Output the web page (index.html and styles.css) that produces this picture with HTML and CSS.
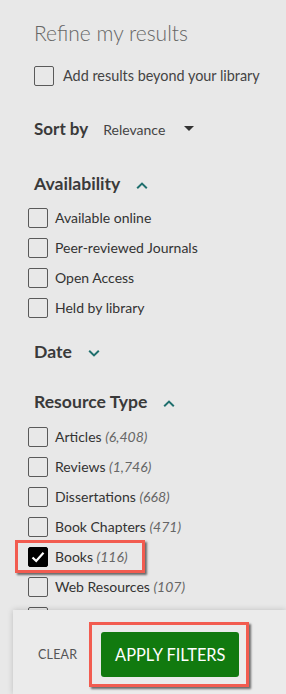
FILE: index.html
```html
<!DOCTYPE html>
<html lang="en">
<head>
<meta charset="utf-8">
<title>Refine my results</title>
<link rel="stylesheet" href="styles.css">
</head>
<body>
<div class="panel">
  <h2 class="title">Refine my results</h2>

  <label class="row row-wide">
    <span class="box"></span>
    <span class="label label-wide">Add results beyond your library</span>
  </label>

  <div class="sort">
    <span class="sort-label">Sort by</span>
    <span class="sort-value">Relevance</span>
    <svg class="caret" width="10" height="5" viewBox="0 0 10 5"><path d="M0 0H10L5 5Z" fill="#333"/></svg>
  </div>

  <h3 class="facet-head facet-avail">Availability
    <svg class="chev" width="12" height="7" viewBox="0 0 12 7"><path d="M1.2 6.2L6 1.6L10.8 6.2" fill="none" stroke="#1f6f6d" stroke-width="2"/></svg>
  </h3>
  <div class="list list-avail">
    <label class="row"><span class="box"></span><span class="label">Available online</span></label>
    <label class="row"><span class="box"></span><span class="label">Peer-reviewed Journals</span></label>
    <label class="row"><span class="box"></span><span class="label">Open Access</span></label>
    <label class="row"><span class="box"></span><span class="label">Held by library</span></label>
  </div>

  <h3 class="facet-head facet-date">Date
    <svg class="chev" width="12" height="7" viewBox="0 0 12 7"><path d="M1.2 0.8L6 5.4L10.8 0.8" fill="none" stroke="#1f6f6d" stroke-width="2"/></svg>
  </h3>

  <h3 class="facet-head facet-type">Resource Type
    <svg class="chev" width="12" height="7" viewBox="0 0 12 7"><path d="M1.2 6.2L6 1.6L10.8 6.2" fill="none" stroke="#1f6f6d" stroke-width="2"/></svg>
  </h3>
  <div class="list list-type">
    <label class="row"><span class="box"></span><span class="label">Articles <em>(6,408)</em></span></label>
    <label class="row"><span class="box"></span><span class="label">Reviews <em>(1,746)</em></span></label>
    <label class="row"><span class="box"></span><span class="label">Dissertations <em>(668)</em></span></label>
    <label class="row"><span class="box"></span><span class="label">Book Chapters <em>(471)</em></span></label>
    <label class="row row-marked"><span class="box box-checked"><svg width="14" height="12" viewBox="0 0 14 12"><path d="M1.5 6.5L5.2 10L12.5 1.8" fill="none" stroke="#fff" stroke-width="2.2"/></svg></span><span class="label">Books <em>(116)</em></span></label>
    <label class="row"><span class="box"></span><span class="label">Web Resources <em>(107)</em></span></label>
    <label class="row"><span class="box"></span><span class="label">Journals <em>(52)</em></span></label>
  </div>
</div>

<div class="footer">
  <button class="btn-clear">CLEAR</button>
  <button class="btn-apply">APPLY FILTERS</button>
</div>
</body>
</html>
```

FILE: styles.css
```css
html, body {
  margin: 0;
  padding: 0;
}
body {
  width: 286px;
  height: 694px;
  overflow: hidden;
  background: #e8e8e8;
  font-family: Lato, "Open Sans", sans-serif;
  color: #333;
  position: relative;
}
.panel {
  display: flex;
  flex-direction: column;
  align-items: flex-start;
  padding: 20px 0 0 34px;
}
.title {
  margin: 0;
  font-size: 21px;
  line-height: 26px;
  font-weight: 300;
  color: #666;
}
.row {
  display: flex;
  align-items: center;
  height: 20px;
  gap: 7px;
  position: relative;
}
.row-wide {
  margin-top: 20px;
  gap: 9px;
}
.box {
  box-sizing: border-box;
  width: 20px;
  height: 20px;
  border: 1px solid #5a5a5a;
  border-radius: 2px;
  flex: none;
  display: flex;
  align-items: center;
  justify-content: center;
}
.box-checked {
  background: #000;
  border-color: #000;
}
.label {
  font-size: 14px;
  line-height: 20px;
  color: #333;
  white-space: nowrap;
}
.label-wide {
  font-size: 14.4px;
  color: #444;
}
.label em {
  color: #666;
  font-style: italic;
}
.sort {
  margin-top: 33px;
  display: flex;
  align-items: center;
  height: 20px;
}
.sort-label {
  font-size: 17px;
  line-height: 20px;
  font-weight: 700;
  color: #3a3a3a;
}
.sort-value {
  font-size: 14px;
  margin-left: 15px;
  color: #444;
}
.caret {
  margin-left: 19px;
  margin-top: -2px;
}
.facet-head {
  margin: 0;
  display: flex;
  align-items: center;
  font-size: 17.6px;
  line-height: 20px;
  font-weight: 700;
  color: #3a3a3a;
}
.chev {
  margin-left: 16px;
  margin-top: 2px;
}
.facet-avail { margin-top: 35px; }
.facet-date { margin-top: 24px; }
.facet-type { margin-top: 30px; }
.list {
  display: flex;
  flex-direction: column;
  gap: 10px;
  margin-left: -6px;
}
.list-avail { margin-top: 14px; }
.list-type { margin-top: 15px; }

.row-marked::after {
  content: "";
  position: absolute;
  left: -13px;
  top: -7px;
  width: 130px;
  height: 33px;
  box-sizing: border-box;
  border: 3px solid #f25c50;
  box-shadow: 2px 2px 2px rgba(0, 0, 0, 0.55);
}

.footer {
  position: absolute;
  left: 13px;
  right: 0;
  top: 610px;
  bottom: 0;
  background: #ebebeb;
  box-shadow: 0 0 6px rgba(0, 0, 0, 0.18);
  display: flex;
  align-items: flex-start;
  padding: 22px 0 0 25px;
  gap: 24px;
  z-index: 2;
}
.btn-clear {
  border: 0;
  background: none;
  padding: 0;
  height: 45px;
  font-family: Lato, "Open Sans", sans-serif;
  font-size: 12.5px;
  color: #555;
  letter-spacing: 0.2px;
}
.btn-apply {
  position: relative;
  border: 0;
  border-radius: 3px;
  background: #117a0f;
  color: #fff;
  width: 138px;
  height: 45px;
  padding: 0;
  font-family: Lato, "Open Sans", sans-serif;
  font-size: 16.4px;
}
.btn-apply::after {
  content: "";
  position: absolute;
  left: -12px;
  top: -10px;
  right: -10px;
  bottom: -10px;
  border: 3px solid #f25c50;
  box-shadow: 2px 2px 2px rgba(0, 0, 0, 0.55);
}
```
